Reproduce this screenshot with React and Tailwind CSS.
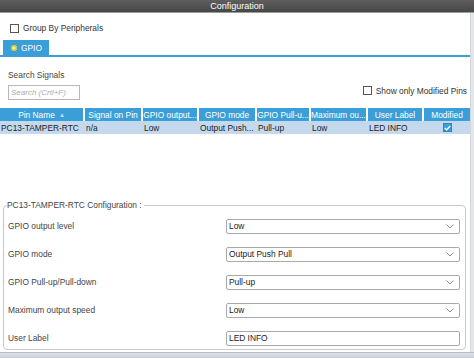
import React from "react";

const cols = [
  { name: "Pin Name", w: 83, val: "PC13-TAMPER-RTC", sort: true },
  { name: "Signal on Pin", w: 56, val: "n/a" },
  { name: "GPIO output...", w: 54, val: "Low" },
  { name: "GPIO mode", w: 56, val: "Output Push..." },
  { name: "GPIO Pull-u...", w: 52, val: "Pull-up" },
  { name: "Maximum ou...", w: 55, val: "Low" },
  { name: "User Label", w: 54, val: "LED INFO" },
  { name: "Modified", w: 46, val: null },
];

const fields = [
  { label: "GPIO output level", value: "Low", select: true },
  { label: "GPIO mode", value: "Output Push Pull", select: true },
  { label: "GPIO Pull-up/Pull-down", value: "Pull-up", select: true },
  { label: "Maximum output speed", value: "Low", select: true },
  { label: "User Label", value: "LED INFO", select: false },
];

const Chevron = () => (
  <svg width="8" height="5" viewBox="0 0 8 5" className="text-[#8a8a8a]">
    <path d="M0.5 0.5 L4 4 L7.5 0.5" fill="none" stroke="currentColor" strokeWidth="1" />
  </svg>
);

const Box = ({ checked }) =>
  checked ? (
    <span className="w-[9px] h-[9px] bg-[#3a9fd8] border border-[#2f86bb] flex items-center justify-center">
      <svg width="7" height="6" viewBox="0 0 7 6">
        <path d="M0.8 3 L2.7 4.8 L6.2 1" fill="none" stroke="white" strokeWidth="1.3" />
      </svg>
    </span>
  ) : (
    <span className="w-[9px] h-[9px] border border-[#555] bg-white" />
  );

export default function App() {
  return (
    <div
      className="w-[474px] h-[358px] bg-white relative overflow-hidden text-[#333] text-[8.4px] leading-[12px]"
      style={{ fontFamily: '"Liberation Sans", Arial, sans-serif' }}
    >
      {/* title bar */}
      <div className="h-[13px] bg-gradient-to-b from-[#5e5e5e] to-[#474747] border-b border-[#9c9c9c] flex items-center justify-center text-white text-[9px]">
        Configuration
      </div>

      <div className="flex h-[339px]">
        <div className="flex-1 flex flex-col">
          <div className="flex items-center gap-[4px] pl-[10px] mt-[10px] h-[10px]">
            <Box />
            <span>Group By Peripherals</span>
          </div>

          {/* tab */}
          <div className="mt-[7px] border-b-2 border-[#3a9fd8] flex pl-[3px]">
            <div className="w-[46px] h-[15px] bg-[#3a9fd8] flex items-center gap-[4px] pl-[8px] text-white">
              <span className="w-[6px] h-[6px] rounded-full bg-[#e8d23c] flex items-center justify-center">
                <span className="w-[2px] h-[2px] bg-white rounded-full" />
              </span>
              GPIO
            </div>
          </div>

          <div className="pl-[8px] mt-[12px] text-[#444]">Search Signals</div>
          <div className="flex items-center justify-between pl-[8px] pr-[3px] mt-[4px] h-[15px]">
            <div className="w-[72px] h-[15px] border border-[#b8b8b8] flex items-center pl-[2px] italic text-[#aaa] text-[8px]">
              Search (Crtl+F)
            </div>
            <div className="flex items-center gap-[4px] mb-[4px]">
              <Box />
              <span>Show only Modified Pins</span>
            </div>
          </div>

          {/* table */}
          <div className="mt-[8px] flex gap-[2px]">
            {cols.map((c) => (
              <div
                key={c.name}
                style={{ width: c.w }}
                className="h-[13px] bg-[#3a9fd8] text-white flex items-center justify-center whitespace-nowrap overflow-hidden"
              >
                {c.name}
                {c.sort && <span className="ml-[4px] text-[6px] text-[#bfe0f3]">▲</span>}
              </div>
            ))}
          </div>
          <div className="flex gap-[2px] bg-[#c5d9ee] w-[470px]">
            {cols.map((c) => (
              <div
                key={c.name}
                style={{ width: c.w }}
                className={`h-[13px] flex items-center whitespace-nowrap overflow-hidden text-[#222] ${
                  c.val === null ? "justify-center" : "pl-[1px]"
                }`}
              >
                {c.val === null ? <Box checked /> : c.val}
              </div>
            ))}
          </div>

          {/* configuration fieldset */}
          <fieldset className="mt-[66px] ml-[3px] mr-[4px] border border-[#c9c9c9] rounded-[4px] pb-[4px]">
            <legend className="ml-[3px] pr-[2px] text-[#444] leading-[10px]">
              PC13-TAMPER-RTC Configuration :
            </legend>
            <div className="flex flex-col gap-[14px] mt-[9px]">
              {fields.map((f) => (
                <div key={f.label} className="flex items-center h-[14px]">
                  <span className="w-[222px] pl-[4px] text-[#444]">{f.label}</span>
                  <div className="w-[234px] h-[15px] border border-[#a9a9a9] rounded-[2px] flex items-center justify-between pl-[2px] pr-[5px] text-[#222]">
                    <span>{f.value}</span>
                    {f.select && <Chevron />}
                  </div>
                </div>
              ))}
            </div>
          </fieldset>
        </div>
        <div className="w-[4px] bg-[#e4e7ea] border-l border-[#d4d8dc]" />
      </div>

      <div className="h-[6px] bg-gradient-to-b from-[#dfe3e7] to-[#c9ced4] border-t border-[#b8bdc3]" />
    </div>
  );
}
